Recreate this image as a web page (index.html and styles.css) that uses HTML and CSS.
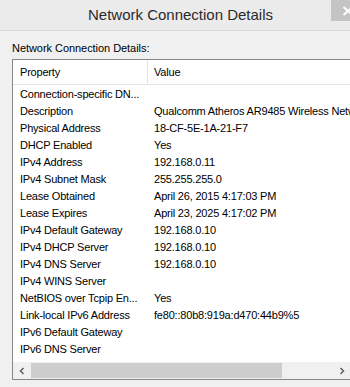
FILE: index.html
```html
<!DOCTYPE html>
<html>
<head>
<meta charset="utf-8">
<link rel="stylesheet" href="styles.css">
</head>
<body>
<div class="window">
  <div class="titlebar">
    <div class="title">Network Connection Details</div>
    <div class="close">
      <svg width="12" height="10" viewBox="0 0 12 10"><path d="M1.5 1 L10.5 9 M10.5 1 L1.5 9" stroke="#fff" stroke-width="2" fill="none"/></svg>
    </div>
  </div>
  <div class="content">
    <div class="label">Network Connection Details:</div>
    <div class="listbox">
      <div class="header">
        <div class="hcell prop">Property</div>
        <div class="hcell val">Value</div>
      </div>
      <div class="rows">
        <div class="row"><div class="c prop">Connection-specific DN...</div><div class="c val"></div></div>
        <div class="row"><div class="c prop">Description</div><div class="c val">Qualcomm Atheros AR9485 Wireless Network Adapter</div></div>
        <div class="row"><div class="c prop">Physical Address</div><div class="c val">18-CF-5E-1A-21-F7</div></div>
        <div class="row"><div class="c prop">DHCP Enabled</div><div class="c val">Yes</div></div>
        <div class="row"><div class="c prop">IPv4 Address</div><div class="c val">192.168.0.11</div></div>
        <div class="row"><div class="c prop">IPv4 Subnet Mask</div><div class="c val">255.255.255.0</div></div>
        <div class="row"><div class="c prop">Lease Obtained</div><div class="c val">April 26, 2015 4:17:03 PM</div></div>
        <div class="row"><div class="c prop">Lease Expires</div><div class="c val">April 23, 2025 4:17:02 PM</div></div>
        <div class="row"><div class="c prop">IPv4 Default Gateway</div><div class="c val">192.168.0.10</div></div>
        <div class="row"><div class="c prop">IPv4 DHCP Server</div><div class="c val">192.168.0.10</div></div>
        <div class="row"><div class="c prop">IPv4 DNS Server</div><div class="c val">192.168.0.10</div></div>
        <div class="row"><div class="c prop">IPv4 WINS Server</div><div class="c val"></div></div>
        <div class="row"><div class="c prop">NetBIOS over Tcpip En...</div><div class="c val">Yes</div></div>
        <div class="row"><div class="c prop">Link-local IPv6 Address</div><div class="c val">fe80::80b8:919a:d470:44b9%5</div></div>
        <div class="row"><div class="c prop">IPv6 Default Gateway</div><div class="c val"></div></div>
        <div class="row"><div class="c prop">IPv6 DNS Server</div><div class="c val"></div></div>
      </div>
      <div class="hscroll">
        <div class="sbtn">
          <svg width="8" height="8" viewBox="0 0 8 8"><path d="M5.5 1 L2.5 4 L5.5 7" stroke="#606060" stroke-width="1.5" fill="none"/></svg>
        </div>
        <div class="thumb"></div>
        <div class="track"></div>
        <div class="sbtn">
          <svg width="8" height="8" viewBox="0 0 8 8"><path d="M2.5 1 L5.5 4 L2.5 7" stroke="#606060" stroke-width="1.5" fill="none"/></svg>
        </div>
      </div>
    </div>
  </div>
</div>
</body>
</html>
```
FILE: styles.css
```css
html, body {
  margin: 0;
  padding: 0;
  width: 350px;
  height: 387px;
  overflow: hidden;
  background: #f0f0f0;
}
.window {
  width: 350px;
  height: 387px;
  display: flex;
  flex-direction: column;
  font-family: "Liberation Sans", Arial, sans-serif;
  color: #000;
  overflow: hidden;
}
.titlebar {
  height: 30px;
  flex: none;
  background: #ebebeb;
  border-bottom: 1px solid #dadada;
  display: flex;
  position: relative;
}
.title {
  flex: 1;
  text-align: center;
  padding-left: 11px;
  font-size: 15px;
  line-height: 30px;
  color: #2b2b2b;
}
.close {
  position: absolute;
  left: 331px;
  top: 0;
  width: 36px;
  height: 21px;
  background: #c4c4c4;
  display: flex;
  align-items: center;
  padding-left: 11px;
  box-sizing: border-box;
}
.close svg { display: block; }
.content {
  flex: 1;
  display: flex;
  flex-direction: column;
  padding-left: 12px;
}
.label {
  margin-top: 11px;
  font-size: 11px;
  line-height: 13px;
  height: 13px;
  letter-spacing: -0.05px;
  white-space: nowrap;
}
.listbox {
  margin-top: 4px;
  width: 339px;
  height: 321px;
  box-sizing: border-box;
  border: 1px solid #828790;
  background: #fff;
  display: flex;
  flex-direction: column;
  overflow: hidden;
  font-size: 11px;
  letter-spacing: -0.2px;
}
.header {
  height: 24px;
  flex: none;
  display: flex;
  border-bottom: 1px solid #e5e5e5;
}
.hcell {
  line-height: 24px;
  white-space: nowrap;
}
.prop {
  width: 135px;
  flex: none;
  box-sizing: border-box;
  padding-left: 7px;
  white-space: nowrap;
  overflow: hidden;
}
.hcell.prop {
  border-right: 1px solid #e5e5e5;
}
.val {
  flex: 1;
  padding-left: 6px;
  white-space: nowrap;
  overflow: hidden;
}
.rows {
  flex: 1;
  overflow: hidden;
  padding-top: 1px;
}
.row {
  height: 17px;
  display: flex;
  line-height: 17px;
}
.hscroll {
  height: 17px;
  flex: none;
  display: flex;
  background: #f0f0f0;
}
.sbtn {
  width: 17px;
  flex: none;
  display: flex;
  align-items: center;
  justify-content: center;
}
.sbtn svg { display: block; }
.thumb {
  width: 251px;
  margin: 1px 0 1px 1px;
  background: #cdcdcd;
  flex: none;
}
.track {
  flex: 1;
}
```
